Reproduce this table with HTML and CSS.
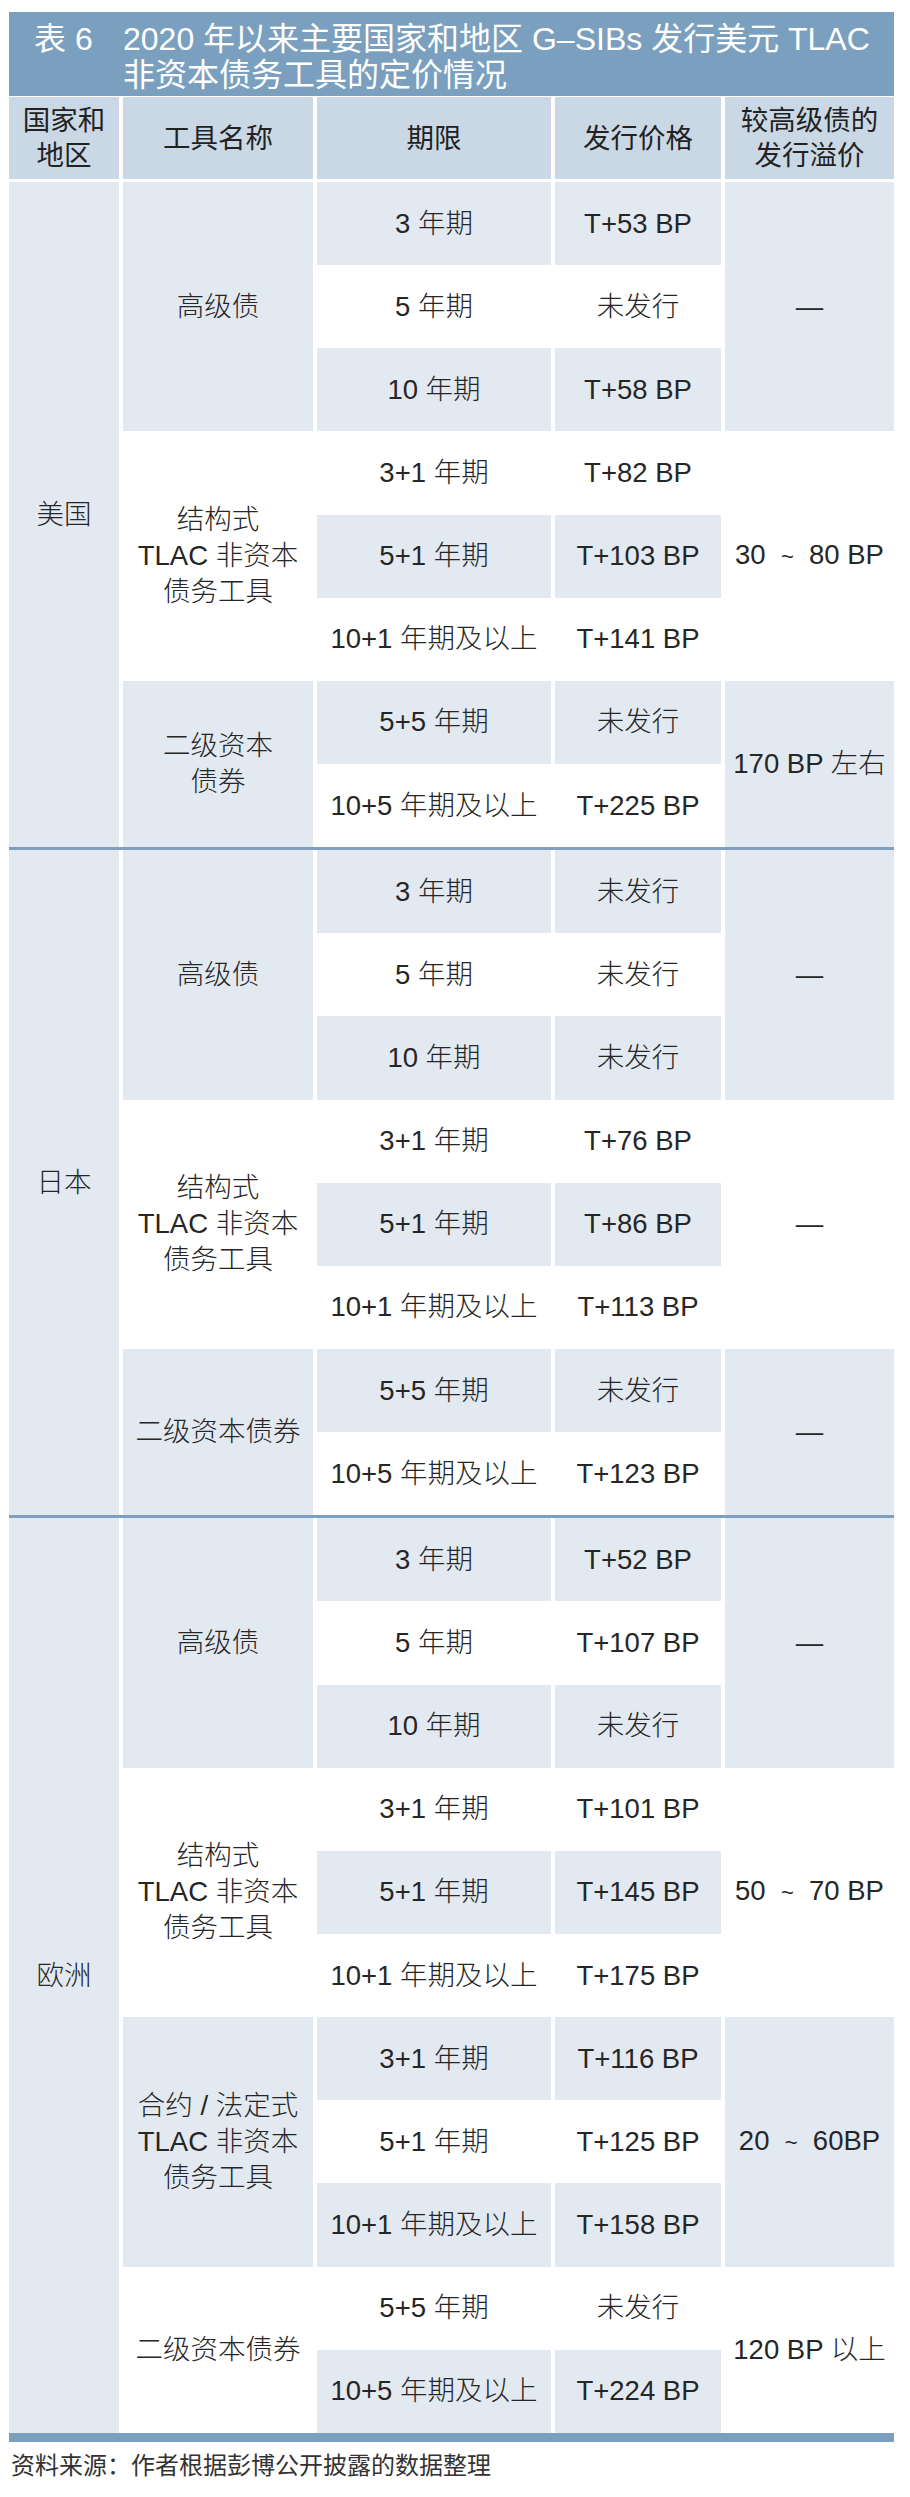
FILE: index.html
```html
<!DOCTYPE html>
<html lang="zh-CN">
<head>
<meta charset="utf-8">
<title>表 6 2020 年以来主要国家和地区 G–SIBs 发行美元 TLAC 非资本债务工具的定价情况</title>
<link rel="stylesheet" href="styles.css">
</head>
<body>
<div class="title-bar">
  <div class="title-label">表 6</div>
  <div class="title-text">2020 年以来主要国家和地区 G–SIBs 发行美元 TLAC<br>非资本债务工具的定价情况</div>
</div>
<table class="grid">
  <colgroup>
    <col class="c1"><col class="c2"><col class="c3"><col class="c4"><col class="c5">
  </colgroup>
  <thead>
    <tr class="head">
      <th>国家和<br>地区</th>
      <th>工具名称</th>
      <th>期限</th>
      <th>发行价格</th>
      <th>较高级债的<br>发行溢价</th>
    </tr>
  </thead>
  <tbody>
    <!-- 美国 -->
    <tr>
      <td class="b" rowspan="8">美国</td>
      <td class="b" rowspan="3">高级债</td>
      <td class="b">3 年期</td><td class="b">T+53 BP</td>
      <td class="b" rowspan="3">—</td>
    </tr>
    <tr><td>5 年期</td><td>未发行</td></tr>
    <tr><td class="b">10 年期</td><td class="b">T+58 BP</td></tr>
    <tr>
      <td rowspan="3">结构式<br>TLAC 非资本<br>债务工具</td>
      <td>3+1 年期</td><td>T+82 BP</td>
      <td rowspan="3">30&nbsp; <span class="tilde">~</span>&nbsp; 80 BP</td>
    </tr>
    <tr><td class="b">5+1 年期</td><td class="b">T+103 BP</td></tr>
    <tr><td>10+1 年期及以上</td><td>T+141 BP</td></tr>
    <tr>
      <td class="b" rowspan="2">二级资本<br>债券</td>
      <td class="b">5+5 年期</td><td class="b">未发行</td>
      <td class="b" rowspan="2">170 BP 左右</td>
    </tr>
    <tr><td>10+5 年期及以上</td><td>T+225 BP</td></tr>
    <tr class="sep"><td colspan="5"></td></tr>

    <!-- 日本 -->
    <tr>
      <td class="b" rowspan="8">日本</td>
      <td class="b" rowspan="3">高级债</td>
      <td class="b">3 年期</td><td class="b">未发行</td>
      <td class="b" rowspan="3">—</td>
    </tr>
    <tr><td>5 年期</td><td>未发行</td></tr>
    <tr><td class="b">10 年期</td><td class="b">未发行</td></tr>
    <tr>
      <td rowspan="3">结构式<br>TLAC 非资本<br>债务工具</td>
      <td>3+1 年期</td><td>T+76 BP</td>
      <td rowspan="3">—</td>
    </tr>
    <tr><td class="b">5+1 年期</td><td class="b">T+86 BP</td></tr>
    <tr><td>10+1 年期及以上</td><td>T+113 BP</td></tr>
    <tr>
      <td class="b" rowspan="2">二级资本债券</td>
      <td class="b">5+5 年期</td><td class="b">未发行</td>
      <td class="b" rowspan="2">—</td>
    </tr>
    <tr><td>10+5 年期及以上</td><td>T+123 BP</td></tr>
    <tr class="sep"><td colspan="5"></td></tr>

    <!-- 欧洲 -->
    <tr>
      <td class="b" rowspan="11">欧洲</td>
      <td class="b" rowspan="3">高级债</td>
      <td class="b">3 年期</td><td class="b">T+52 BP</td>
      <td class="b" rowspan="3">—</td>
    </tr>
    <tr><td>5 年期</td><td>T+107 BP</td></tr>
    <tr><td class="b">10 年期</td><td class="b">未发行</td></tr>
    <tr>
      <td rowspan="3">结构式<br>TLAC 非资本<br>债务工具</td>
      <td>3+1 年期</td><td>T+101 BP</td>
      <td rowspan="3">50&nbsp; <span class="tilde">~</span>&nbsp; 70 BP</td>
    </tr>
    <tr><td class="b">5+1 年期</td><td class="b">T+145 BP</td></tr>
    <tr><td>10+1 年期及以上</td><td>T+175 BP</td></tr>
    <tr>
      <td class="b" rowspan="3">合约 / 法定式<br>TLAC 非资本<br>债务工具</td>
      <td class="b">3+1 年期</td><td class="b">T+116 BP</td>
      <td class="b" rowspan="3">20&nbsp; <span class="tilde">~</span>&nbsp; 60BP</td>
    </tr>
    <tr><td>5+1 年期</td><td>T+125 BP</td></tr>
    <tr><td class="b">10+1 年期及以上</td><td class="b">T+158 BP</td></tr>
    <tr>
      <td rowspan="2">二级资本债券</td>
      <td>5+5 年期</td><td>未发行</td>
      <td rowspan="2">120 BP 以上</td>
    </tr>
    <tr><td class="b">10+5 年期及以上</td><td class="b">T+224 BP</td></tr>
  </tbody>
</table>
<div class="bottom-bar"></div>
<div class="source">资料来源：作者根据彭博公开披露的数据整理</div>
</body>
</html>
```

FILE: styles.css
```css
html, body {
  margin: 0;
  padding: 0;
  background: #ffffff;
}

body {
  font-family: "Liberation Sans", "Noto Sans CJK SC", sans-serif;
  color: #262626;
}

.title-bar {
  display: flex;
  box-sizing: border-box;
  width: 885px;
  height: 84px;
  margin: 12px 0 0 9px;
  padding: 9px 0 0 25px;
  background: #7b9fbe;
  color: #ffffff;
  font-size: 32px;
  line-height: 36px;
}

.title-label {
  flex: 0 0 89px;
  white-space: nowrap;
}

.title-text {
  flex: 1 1 auto;
  white-space: nowrap;
}

.grid {
  table-layout: fixed;
  border-collapse: separate;
  border-spacing: 4px 0;
  width: 893px;
  margin: 1px 0 0 5px;
  font-size: 27.5px;
  line-height: 36px;
  font-weight: 300;
  color: #262626;
}

.c1 { width: 110px; }
.c2 { width: 190px; }
.c3 { width: 234px; }
.c4 { width: 166px; }
.c5 { width: 169px; }

.grid th,
.grid td {
  padding: 0;
  text-align: center;
  vertical-align: middle;
  white-space: nowrap;
}

.grid th {
  background: #cad8e5;
  font-weight: 400;
  line-height: 35px;
  border-bottom: 3px solid #ffffff;
  color: #222222;
}

.head {
  height: 85px;
}

.grid tbody tr {
  height: 83.15px;
}

.grid td.b {
  background: #e3e9f1;
}

.tilde {
  font-size: 22px;
}

.grid tr.sep {
  height: 3px;
}

.grid tr.sep td {
  height: 3px;
  background: #7e9fbd;
  line-height: 0;
  font-size: 0;
}

.bottom-bar {
  width: 885px;
  height: 9px;
  margin-left: 9px;
  background: #7b9fbe;
}

.source {
  margin: 8px 0 0 11px;
  font-size: 24px;
  line-height: 32px;
  color: #333333;
}
```
